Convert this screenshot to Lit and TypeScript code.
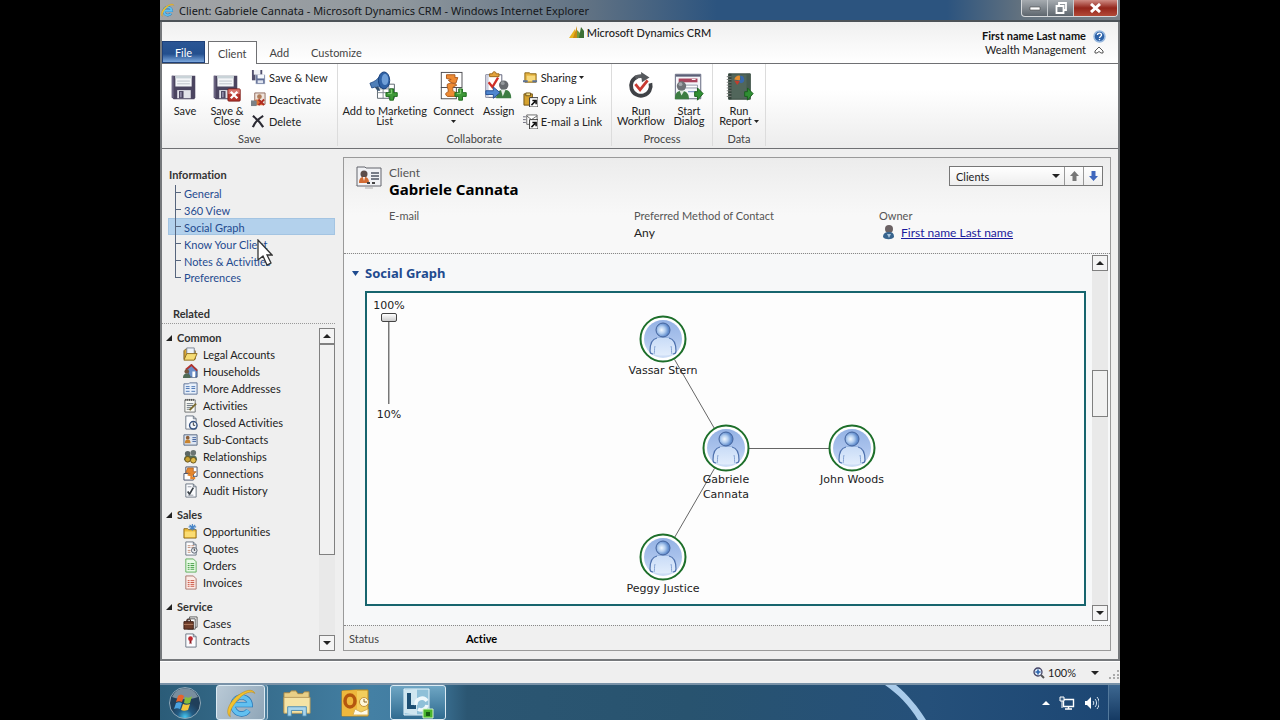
import { LitElement, html, svg, css } from "lit";
import { customElement, property, state } from "lit/decorators.js";
import { classMap } from "lit/directives/class-map.js";

const floppy = svg`<g transform="translate(2 4) scale(.96)">
  <path d="M1 1h26v24l-1 2H3l-2-2z" fill="#4b4560"/><path d="M1 1h2v25l-2-1z" fill="#6d6684"/>
  <path d="M5 1h18v12H5z" fill="#f4f6f8"/><path d="M5 1h18v3H5z" fill="#c9d3d8"/><path d="M7 7h14M7 10h14" stroke="#b9bfc6"/>
  <path d="M7 17h15v9H7z" fill="#e3e4ea"/><path d="M9 18h5v8H9z" fill="#4b4560"/><path d="M10 19h2v6h-2z" fill="#8f8aa5"/></g>`;
const plus = svg`<path d="M22 19h4v4h4v4h-4v4h-4v-4h-4v-4h4z" fill="#3f9a38" stroke="#1d6a1c"/><path d="M23 20h1v4h-4" stroke="#8ccf7e" fill="none"/>`;
const play = svg`<path d="M23 22h3v-4l6 6-6 7v-4h-3z" fill="#2f8f33" stroke="#1a5f1e"/>`;
const manGreen = svg`<circle cx="9" cy="16" r="5" fill="#6e7176"/><circle cx="8" cy="14" r="2" fill="#a2a6aa"/><path d="M2 30c0-7 3-9 7-9s8 2 8 9z" fill="#3d7d43"/><path d="M7 21l2 5 3-5z" fill="#dfe8df"/>`;
const shortcut = svg`<path d="M7 6h9v10H7z" fill="#fff" stroke="#333"/><path d="M9 14l4-4m-3-1h4v4" stroke="#111" stroke-width="1.6" fill="none"/>`;
const page = svg`<path d="M3 1h8l3 3v11H3z" fill="#fbfcfe" stroke="#6c7684"/><path d="M11 1v3h3" fill="none" stroke="#6c7684"/>`;

const big: Record<string, unknown> = {
  save: floppy,
  saveClose: svg`${floppy}<rect x="18" y="19" width="13" height="13" rx="1" fill="#b5342c" stroke="#7d1d19"/><path d="M18.500 19.500h12v5h-12z" fill="#d9776f"/><path d="M21 22l7 7m0-7l-7 7" stroke="#fff" stroke-width="2.400"/>`,
  marketing: svg`<path d="M9 14h18v15H9z" fill="#fff" stroke="#59636c"/><path d="M9 19h18M9 23h18M15 14v15M21 14v15" stroke="#7d878e"/>
    <path d="M1 13c6-2 9-5 13-11v16c-4-2-7-1-11 0z" fill="#4f7fb8" stroke="#27508a"/><ellipse cx="16" cy="10" rx="6" ry="9" fill="#2f62a6" stroke="#173f7a"/><ellipse cx="17" cy="9" rx="3.500" ry="6" fill="#6f9fd8"/><path d="M6 17l3 4h3l-2-4z" fill="#35506f"/>${plus}`,
  connect: svg`<rect x="3.500" y="1.500" width="22" height="16" fill="#fff" stroke="#4b4b50"/><rect x="3.500" y="17.500" width="16" height="12" fill="#fff" stroke="#4b4b50"/><path d="M9 4h9v3h3l-2 6h-4l-4-3 3-1-5-1z" fill="#ee8b33" stroke="#a7551a"/><path d="M10 14c4-2 7-1 10 1l-4 2c-1 4 0 5 4 6l-2 4h-8c-3-2-2-4 1-5 0-4-2-5-1-8z" fill="#ee8b33" stroke="#a7551a"/>${plus}`,
  assign: svg`<path d="M3 4h17v24H3z" fill="#fff" stroke="#5c5f78"/><path d="M3 4h3v24H3z" fill="#cdd0df"/><path d="M7 3h3c0-3 4-3 4 0h3v3H7z" fill="#e3a33c" stroke="#9a6518"/><path d="M6 12l4 5 6-10" stroke="#cf3029" stroke-width="2.500" fill="none"/><circle cx="22" cy="15" r="5" fill="#66696e"/><circle cx="21" cy="13" r="2" fill="#94989c"/><path d="M14 29c0-7 3-9 8-9s8 2 8 9z" fill="#3d7d43"/><path d="M19 20l2 7 3-7z" fill="#e8eee8"/><path d="M3 21h8v-4l7 6-7 6v-4H3z" fill="#4e86cf" stroke="#234f94"/>`,
  workflow: svg`<path d="M13 6A10.500 10.500 0 1 0 27 13" fill="none" stroke="#3f4246" stroke-width="4"/><path d="M11 7A11 11 0 0 1 20 6" fill="none" stroke="#5a5d61" stroke-width="4"/><path d="M17 1l9 6-8 5z" fill="#55585c"/><path d="M11 14l5 6 8-10" fill="none" stroke="#c93a31" stroke-width="3"/>`,
  dialog: svg`<path d="M2.500 3.500h27v26h-27z" fill="#f5f6fa" stroke="#5b6077"/><path d="M3 4h26v2H3z" fill="#5b6077"/><path d="M6 8h20v4H6z" fill="#a8435c"/><path d="M20 9h4" stroke="#fff"/><path d="M7 15h19v3H7z" fill="#fff" stroke="#8f94a8"/><path d="M16 22h9" stroke="#5a79b8"/>${manGreen}${play}`,
  report: svg`<path d="M6 3h23v27H6z" fill="#51665b" stroke="#38493f"/><path d="M6 3h3v27H6z" fill="#33443b"/><path d="M25 3h4v27h-4z" fill="#465a50"/><path d="M4 6h5M4 9h5M4 12h5M4 15h5M4 18h5M4 21h5M4 24h5M4 27h5" stroke="#777b78"/><path d="M12 9a5 5 0 0 1 6-4v5z" fill="#e58c2f"/><path d="M18 5a4 4 0 0 1 1 8l-3-2 3-2z" fill="#3768ad"/><path d="M12 10l6 1-3 4z" fill="#c43d2b"/>${play}`,
};

const small: Record<string, unknown> = {
  saveNew: svg`<path d="M1 0h11v11H1z" fill="#51506e"/><path d="M3 0h7v5H3z" fill="#eef1f6"/><path d="M5 5h10v10H5z" fill="#5d6b93" stroke="#f0f2f8" stroke-width=".6"/><path d="M7 5h7v4H7z" fill="#f4f7fc"/><path d="M7 11h6v3H7z" fill="#dfe4ef"/>`,
  deactivate: svg`<path d="M4 1h11v12H4z" fill="#efe4dd" stroke="#906a5c"/><circle cx="9" cy="5" r="2.500" fill="#b07c58"/><path d="M2 14c0-5 2-6 5-6s6 2 6 6z" fill="#dd7336"/><path d="M0 9h6v6H0z" fill="#7b8187"/><path d="M8 8l6 6m0-6l-6 6" stroke="#b12c22" stroke-width="2"/>`,
  del: svg`<path d="M2 2c4 3 8 7 11 12M13 2C8 5 4 9 2 14" stroke="#2b2a33" stroke-width="2.300" fill="none"/>`,
  sharing: svg`<path d="M2 3h5l1 1h6v9H2z" fill="#e4b23f" stroke="#8b6618"/><path d="M4 6h9v6H4z" fill="#f7d97c"/><path d="M0 12h5m5 0h5" stroke="#5c7295" stroke-width="2"/>`,
  copyLink: svg`<path d="M1 2h9v12H1z" fill="#d5a22f" stroke="#6f5214"/><path d="M3 1h5v3H3z" fill="#f3dd8b" stroke="#6f5214"/>${shortcut}`,
  emailLink: svg`<path d="M4 1h11v10H4z" fill="#fff" stroke="#666"/><path d="M4 2l5 4 6-4" fill="none" stroke="#666"/><path d="M0 3h3M0 6h3M0 9h3" stroke="#667"/>${shortcut}`,
  legal: svg`<path d="M1 4l2-2h4l1 2h5v9H1z" fill="#d9a534" stroke="#7c6124"/><path d="M4 1h8v8H4z" fill="#eef3fa" stroke="#7c8694"/><path d="M4 7h11l-3 7H1z" fill="#f6dc74" stroke="#8d6c1e"/>`,
  households: svg`<path d="M4 6l5-5 6 5v8H7z" fill="#6c8fc9" stroke="#34496f"/><path d="M3 6l6-5 6 6" fill="none" stroke="#b3332d" stroke-width="2"/><path d="M10 8h3v6h-3z" fill="#fff"/><circle cx="4" cy="8" r="2.500" fill="#74553d"/><path d="M0 15c0-4 2-5 4-5s4 1 4 5z" fill="#4f6b57"/>`,
  addresses: svg`<path d="M1 3h5l1-1h8v12H1z" fill="#e8f0fb" stroke="#5d7296"/><path d="M3 6h4m2 0h4M3 8h4m2 0h4M3 11h4m2 0h4" stroke="#4873b2"/>`,
  activities: svg`<path d="M2 2h11v13H2z" fill="#fafaf5" stroke="#6c6f70"/><path d="M3 1v2m2-2v2m2-2v2m2-2v2m2-2v2" stroke="#444"/><path d="M4 6h7M4 8h7M4 10h5M4 12h4" stroke="#6e7780"/><path d="M7 13l7-7" stroke="#7b6b2f" stroke-width="2"/>`,
  closed: svg`${page}<circle cx="11" cy="11" r="4" fill="#f3f7fd" stroke="#35517f" stroke-width="1.500"/><path d="M11 8v3h2" fill="none" stroke="#333"/>`,
  contacts: svg`<path d="M1 3h14v11H1z" fill="#dfe7f3" stroke="#54647f"/><circle cx="5" cy="6" r="2" fill="#8d6038"/><path d="M2 12c0-3 1-4 3-4s3 1 3 4z" fill="#c8832e"/><path d="M10 6h4M10 8h4M10 10h4" stroke="#3e5f9c"/>`,
  relations: svg`<circle cx="5" cy="5" r="3" fill="#5c6663"/><circle cx="11" cy="4" r="3" fill="#6b7573"/><path d="M1 12c0-4 2-5 5-5h5c3 0 4 2 4 5z" fill="#54705f"/><circle cx="5" cy="11" r="3" fill="#c6a032" stroke="#65511b"/><circle cx="11" cy="12" r="3" fill="#e0bb49" stroke="#65511b"/>`,
  connections: svg`<path d="M3 1h12v10H3z" fill="#fff" stroke="#46506a"/><path d="M1 8h10v7H1z" fill="#fff" stroke="#46506a"/><path d="M5 2h6v4h3l-4 4-5-3H3z" fill="#e5862d" stroke="#a2561c" stroke-width=".7"/><path d="M5 9l4 1v3h4" fill="none" stroke="#e5862d" stroke-width="2.500"/>`,
  audit: svg`${page}<path d="M5 9l2 3 4-7" fill="none" stroke="#393f46" stroke-width="1.800"/><path d="M5 4h4M5 13h6" stroke="#939ba5"/>`,
  opportunities: svg`<path d="M1 5h4l1 1h8v9H1z" fill="#eebd3b" stroke="#8c6a1c"/><path d="M2 8h11v6H2z" fill="#fbdc72"/><path d="M10 0v7M6 3h8M7 1l6 5M13 1L7 6" stroke="#4a86c7" stroke-width="1.200"/>`,
  quotes: svg`${page}<path d="M5 5h3m1 0h3M5 7h3m1 0h3M5 10h3M5 12h3" stroke="#c28d74"/><circle cx="12" cy="10" r="3" fill="#e5e9ee" stroke="#555f6d"/><path d="M12 8v2h1" stroke="#333" fill="none"/>`,
  orders: svg`<path d="M3 1h8l3 3v11H3z" fill="#e8fae6" stroke="#5fae5b"/><path d="M5 6h2m1 0h4M5 8h2m1 0h4M5 10h2m1 0h4M5 12h2m1 0h4" stroke="#3f9c3f"/>`,
  invoices: svg`<path d="M3 1h8l3 3v11H3z" fill="#fdebe7" stroke="#a9746a"/><path d="M5 6h2m1 0h4M5 8h2m1 0h4M5 10h2m1 0h4M5 12h2m1 0h4" stroke="#c9523f"/>`,
  cases: svg`<path d="M7 1h8v11H7z" fill="#fff" stroke="#555"/><path d="M5 3h8v11H5z" fill="#fff" stroke="#555"/><path d="M1 6h10v8H1z" fill="#6e3d2a" stroke="#3c1f15"/><path d="M4 6V4h4v2" fill="none" stroke="#3c1f15"/><path d="M1 9h10" stroke="#b17c60"/>`,
  contracts: svg`${page}<circle cx="8" cy="6" r="2.500" fill="#c0262d"/><path d="M7 8h2v4l-1-1-1 1z" fill="#8e1a20"/>`,
};

const icon = (set: Record<string, unknown>, name: string, size: number, box: number) =>
  html`<svg class="ico" width=${size} height=${size} viewBox="0 0 ${box} ${box}" aria-hidden="true">${set[name]}</svg>`;
const tri = (dir: "up" | "down") =>
  html`<svg width="8" height="4" viewBox="0 0 8 4" aria-hidden="true"><path d=${dir === "up" ? "M0 4h8L4 0z" : "M0 0h8L4 4z"} fill="#222"/></svg>`;

type Big = { icon: string; lines: string[]; kind?: string; menu?: "below" | "inline" };
type Small = { icon: string; text: string; menu?: boolean };
const ribbon: { name: string; big: Big[]; small: Small[] }[] = [
  { name: "Save", big: [{ icon: "save", lines: ["Save"] }, { icon: "saveClose", lines: ["Save &", "Close"] }],
    small: [{ icon: "saveNew", text: "Save & New" }, { icon: "deactivate", text: "Deactivate" }, { icon: "del", text: "Delete" }] },
  { name: "Collaborate", big: [{ icon: "marketing", lines: ["Add to Marketing", "List"], kind: "wide" }, { icon: "connect", lines: ["Connect"], kind: "mid", menu: "below" }, { icon: "assign", lines: ["Assign"] }],
    small: [{ icon: "sharing", text: "Sharing", menu: true }, { icon: "copyLink", text: "Copy a Link" }, { icon: "emailLink", text: "E-mail a Link" }] },
  { name: "Process", big: [{ icon: "workflow", lines: ["Run", "Workflow"], kind: "roomy" }, { icon: "dialog", lines: ["Start", "Dialog"] }], small: [] },
  { name: "Data", big: [{ icon: "report", lines: ["Run", "Report"], kind: "mid", menu: "inline" }], small: [] },
];

const base = css`
  *, *::before, *::after { box-sizing: border-box; }
  svg { display: block; flex: none; }
  button { font: inherit; font-variant-ligatures: inherit; color: inherit; background: none; border: 0; padding: 0; margin: 0; }
  a { text-decoration: none; color: inherit; }
`;

@customElement("crm-ribbon")
class CrmRibbon extends LitElement {
  static styles = [base, css`
    :host { display: block; color: #222; }
    .top { display: grid; grid-template-columns: 1fr auto 1fr; height: 42px; background: linear-gradient(#f0f0f0, #fff); border-bottom: 1px solid #6f7073; }
    .tabs { display: flex; align-items: flex-end; gap: 3px; }
    .tab { height: 22px; padding: 0 10px 0 9px; color: #444; }
    .file { width: 43px; padding: 0; color: #fff; border: 1px solid #1e4079; background: linear-gradient(#2b5695, #234f8e 60%, #7ba7dd); }
    .tab.active { height: 23px; margin-bottom: -1px; border: 1px solid #6f7073; border-bottom: 0; background: #fff; }
    .brand { display: flex; align-items: center; gap: 3px; height: 20px; color: #222; font-weight: 500; }
    .who { justify-self: end; display: grid; grid-template-columns: auto 12px; column-gap: 7px; align-content: start; align-items: center; padding: 7px 13px 0 0; line-height: 14px; text-align: right; color: #222; }
    .who strong { color: #111; }
    .bar { display: flex; height: 85px; background: linear-gradient(#fff 30%, #ececec); border-bottom: 1px solid #6f7073; }
    .group { display: flex; flex-direction: column; padding: 3px 2px 0; border-right: 1px solid #dcdcdc; margin-bottom: 2px; }
    .cmds { display: flex; height: 67px; }
    .caption { text-align: center; line-height: 14px; color: #444; }
    .big { display: flex; flex-direction: column; align-items: center; justify-content: flex-start; min-width: 42px; padding-top: 4px; line-height: 10px; }
    .big .ico { margin-bottom: 3px; }
    .big.wide { min-width: 90px; }
    .big.mid { min-width: 48px; }
    .big.roomy { min-width: 54px; }
    .line { display: flex; align-items: center; gap: 2px; white-space: nowrap; }
    .below { height: 10px; display: flex; align-items: center; }
    .col { display: flex; flex-direction: column; padding: 0 7px 0 3px; margin-top: -1px; }
    .small { display: flex; align-items: center; gap: 3px; height: 22px; white-space: nowrap; }
  `];
  private arrow = html`<svg width="5" height="3" viewBox="0 0 5 3"><path d="M0 0h5L2.500 3z" fill="#222"/></svg>`;
  render() {
    return html`
      <div class="top">
        <div class="tabs" role="tablist">
          <button class="tab file">File</button>
          <button class="tab active" role="tab" aria-selected="true">Client</button>
          <button class="tab" role="tab">Add</button>
          <button class="tab" role="tab">Customize</button>
        </div>
        <div class="brand">
          <svg width="15" height="12" viewBox="0 0 15 12"><path d="M0 12L6 3v9z" fill="#e8b51e"/><path d="M4 12L8 0v12z" fill="#c98b12"/><path d="M8 12V4l3 3v5z" fill="#6f9a3c"/><path d="M10 12l2-11 3 4v7z" fill="#3c6f35"/></svg>
          <span>Microsoft Dynamics CRM</span>
        </div>
        <div class="who">
          <strong>First name Last name</strong>
          <svg width="13" height="13" viewBox="0 0 13 13"><circle cx="6.500" cy="6.500" r="5.500" fill="#2d62a8" stroke="#98b9df" stroke-width="1.500"/><path d="M4.500 5c0-2.500 4-2.500 4 0 0 1.400-2 1.500-2 3m0 1v1.200" stroke="#fff" stroke-width="1.400" fill="none"/></svg>
          <span>Wealth Management</span>
          <svg width="12" height="8" viewBox="-1 0 12 8"><path d="M1 5l4-4 4 4v2H7L5 5.500 3 7H1z" fill="#fff" stroke="#555"/></svg>
        </div>
      </div>
      <div class="bar">
        ${ribbon.map(g => html`<section class="group" aria-label=${g.name}>
          <div class="cmds">
            ${g.big.map(b => html`<button class="big ${b.kind ?? ""}">
              ${icon(big, b.icon, 32, 34)}
              ${b.lines.map((l, i) => html`<span class="line">${l}${b.menu === "inline" && i === b.lines.length - 1 ? this.arrow : ""}</span>`)}
              ${b.menu === "below" ? html`<span class="below">${this.arrow}</span>` : ""}
            </button>`)}
            ${g.small.length ? html`<div class="col">${g.small.map(s => html`<button class="small">${icon(small, s.icon, 15, 16)}<span class="line">${s.text}${s.menu ? this.arrow : ""}</span></button>`)}</div>` : ""}
          </div>
          <div class="caption">${g.name}</div>
        </section>`)}
      </div>`;
  }
}

const related: [string, [string, string][]][] = [
  ["Common", [["legal", "Legal Accounts"], ["households", "Households"], ["addresses", "More Addresses"], ["activities", "Activities"], ["closed", "Closed Activities"], ["contacts", "Sub-Contacts"], ["relations", "Relationships"], ["connections", "Connections"], ["audit", "Audit History"]]],
  ["Sales", [["opportunities", "Opportunities"], ["quotes", "Quotes"], ["orders", "Orders"], ["invoices", "Invoices"]]],
  ["Service", [["cases", "Cases"], ["contracts", "Contracts"]]],
];

const scrollCss = css`
  .scroll { display: flex; flex-direction: column; width: 16px; background: #e9e9e9; }
  .step { display: grid; place-items: center; height: 16px; border: 1px solid #808080; background: #f4f4f4; }
  .track { flex: 1; display: grid; }
  .thumb { border: 1px solid #808080; background: #f1f1f1; }
`;

@customElement("crm-nav")
class CrmNav extends LitElement {
  @state() private current = "Social Graph";
  static styles = [base, scrollCss, css`
    :host { display: flex; flex-direction: column; min-height: 0; padding: 17px 8px 8px 0; color: #222; }
    h2, h3 { margin: 0; font-size: 11px; line-height: 17px; color: #333; }
    .info { padding-left: 7px; }
    ul { list-style: none; margin: 0; padding: 0; }
    .sections { padding-top: 1px; margin-left: -1px; }
    .sections li { display: grid; grid-template-columns: 15px 1fr; border: 1px solid transparent; height: 17px; align-items: center; }
    .sections li.on { background: #b3d1ec; border-color: #a3c4e2; }
    .sections a { color: #1f4b8f; line-height: 15px; }
    .branch { height: 17px; border-left: 1px solid #56657d; margin-left: 6px; }
    .branch::after { content: ""; display: block; width: 5px; height: 8px; border-bottom: 1px solid #56657d; }
    li:last-child .branch { height: 8px; align-self: start; }
    .related { margin: 18px 0 0; padding-left: 11px; border-bottom: 1px dotted #999; line-height: 19px; }
    .pane { flex: 1; min-height: 0; display: grid; grid-template-columns: 1fr 16px; padding-top: 4px; }
    .groups { overflow: hidden; padding: 1px 0 0 4px; }
    .head { display: flex; align-items: center; gap: 5px; }
    .group { padding-bottom: 7px; }
    .item { display: flex; align-items: center; gap: 5px; height: 17px; padding-left: 17px; white-space: nowrap; }
    .track { grid-template-rows: 212fr 80fr; }
  `];
  render() {
    const info = ["General", "360 View", "Social Graph", "Know Your Client", "Notes & Activities", "Preferences"];
    return html`
      <nav class="info" aria-label="Information"><h2>Information</h2>
        <ul class="sections">${info.map(t => html`<li class=${classMap({ on: t === this.current })}><span class="branch"></span><a href="#" @click=${(e: Event) => { e.preventDefault(); this.current = t; }}>${t}</a></li>`)}</ul>
      </nav>
      <h2 class="related">Related</h2>
      <div class="pane">
        <nav class="groups" aria-label="Related">
          ${related.map(([name, items]) => html`<div class="group">
            <h3 class="head"><svg width="6" height="6" viewBox="0 0 6 6"><path d="M6 0v6H0z" fill="#222"/></svg>${name}</h3>
            <ul>${items.map(([i, t]) => html`<li><a class="item" href="#">${icon(small, i, 15, 16)}${t}</a></li>`)}</ul>
          </div>`)}
        </nav>
        <div class="scroll"><button class="step" aria-label="Scroll up">${tri("up")}</button><div class="track"><div class="thumb"></div></div><button class="step" aria-label="Scroll down">${tri("down")}</button></div>
      </div>`;
  }
}

const people = [
  { x: 296, y: 46, lines: ["Vassar Stern"] },
  { x: 359, y: 155, lines: ["Gabriele", "Cannata"] },
  { x: 485, y: 155, lines: ["John Woods"] },
  { x: 296, y: 264, lines: ["Peggy Justice"] },
];

@customElement("social-graph")
class SocialGraph extends LitElement {
  @property({ type: Number }) zoom = 100;
  static styles = [base, css`
    :host { display: block; position: relative; border: 2px solid #17656e; background: #fdfdfd; font: 11px/15px "DejaVu Sans", Verdana, sans-serif; color: #222; }
    .edges { position: absolute; inset: 0; width: 100%; height: 100%; }
    .node { position: absolute; width: 90px; margin: -24px 0 0 -45px; display: flex; flex-direction: column; align-items: center; text-align: center; }
    .zoom { position: absolute; left: 4px; top: 5px; width: 36px; display: flex; flex-direction: column; align-items: center; }
    input { appearance: none; writing-mode: vertical-lr; direction: rtl; width: 18px; height: 91px; margin: 0 0 3px; background: linear-gradient(90deg, transparent 8px, #777 8px, #777 9px, #bbb 9px, #bbb 10px, transparent 10px); }
    input::-webkit-slider-thumb { appearance: none; width: 16px; height: 9px; border: 1px solid #444; border-radius: 2px; background: linear-gradient(#fff, #ccc); }
  `];
  render() {
    const hub = people[1];
    return html`
      <svg class="edges">${people.filter(p => p !== hub).map(p => {
        const d = Math.hypot(p.x - hub.x, p.y - hub.y), ux = (p.x - hub.x) / d, uy = (p.y - hub.y) / d;
        return svg`<line x1=${hub.x + ux * 23} y1=${hub.y + uy * 23 + 0.5} x2=${p.x - ux * 23} y2=${p.y - uy * 23 + 0.5} stroke="#666"/>`;
      })}</svg>
      ${people.map(p => html`<div class="node" style="left:${p.x}px;top:${p.y}px">
        <svg width="48" height="48" viewBox="0 0 48 48"><defs>
            <linearGradient id="d" x2="0" y2="1"><stop offset="0" stop-color="#94b2e4"/><stop offset=".5" stop-color="#a9c2ec"/><stop offset="1" stop-color="#cfdff6"/></linearGradient>
            <radialGradient id="h" cx=".4" cy=".5"><stop offset="0" stop-color="#f2f8ff"/><stop offset=".5" stop-color="#b4cff0"/><stop offset="1" stop-color="#5f8bcc"/></radialGradient>
            <linearGradient id="b" x2="0" y2="1"><stop offset="0" stop-color="#c9dcf7"/><stop offset="1" stop-color="#e2edfc"/></linearGradient></defs>
          <circle cx="24" cy="24" r="22.500" fill="#fff" stroke="#1d6f2a" stroke-width="2"/>
          <circle cx="24" cy="24" r="19" fill="url(#d)"/>
          <path d="M11 36c0-8 2-12 7-13h12c5 1 7 5 7 13 0 2-2 3-4 3-3 2-15 2-18 0-2 0-4-1-4-3z" fill="url(#b)"/>
          <path d="M14 39c-2 0-3-1-3-3 0-8 2-12 7-13M34 39c2 0 3-1 3-3 0-8-2-12-7-13" fill="none" stroke="#4d70ad" stroke-width="1.200"/>
          <path d="M15 39c1-2 0-5 1-8M33 39c-1-2 0-5-1-8" fill="none" stroke="#86a4d4"/>
          <path d="M18 22.500h12" stroke="#9ab6e0"/>
          <circle cx="24" cy="15" r="7" fill="url(#h)" stroke="#43639c"/>
        </svg>
        ${p.lines.map(l => html`<span>${l}</span>`)}
      </div>`)}
      <div class="zoom"><label for="z">100%</label>
        <input id="z" type="range" min="10" max="100" .value=${String(this.zoom)}>
        <span>10%</span></div>`;
  }
}

@customElement("crm-record")
class CrmRecord extends LitElement {
  static styles = [base, scrollCss, css`
    :host { display: flex; flex-direction: column; min-height: 0; border: 1px solid #9a9a9a; background: #f7f8f9; color: #222; }
    header { display: grid; grid-template-columns: 45px 1fr auto; grid-template-rows: 42px 1fr; height: 96px; padding: 8px 7px 0 0; background: linear-gradient(#ececec, #f8f8f8 60%); border-bottom: 1px dotted #888; }
    .pic { margin: 0 0 0 11px; }
    .kind { font-size: 12px; line-height: 13px; color: #555; }
    h1 { margin: 0; font: bold 15px/20px "Noto Sans", "Open Sans", sans-serif; color: #000; }
    .pick { display: flex; align-self: start; height: 20px; border: 1px solid #777; background: linear-gradient(#fff, #eee); }
    .choose { display: grid; align-items: center; }
    .choose > * { grid-area: 1 / 1; }
    .choose svg { justify-self: end; margin-right: 4px; pointer-events: none; }
    select { appearance: none; width: 114px; height: 18px; border: 0; background: none; padding: 0 6px; font: inherit; color: #222; }
    .pick button { width: 19px; display: grid; place-items: center; border-left: 1px solid #999; }
    dl { grid-column: 2 / 4; margin: 0; display: grid; grid-template-columns: 35fr 35fr 32fr; }
    dt { color: #555; line-height: 16px; }
    dd { margin: 0; font-size: 12px; line-height: 17px; display: flex; gap: 6px; align-items: center; }
    dd a { color: #1b1b9c; text-decoration: underline; }
    .body { flex: 1; min-height: 0; display: grid; grid-template-columns: 1fr 16px; gap: 6px; padding: 1px 2px 4px 0; }
    .content { display: flex; flex-direction: column; padding: 6px 0 15px 21px; }
    h2 { display: flex; align-items: center; gap: 6px; margin: 0 0 6px -13px; font: bold 13px/24px "Noto Sans", "Open Sans", sans-serif; color: #1f4b8f; }
    social-graph { flex: 1; }
    .track { grid-template-rows: 99fr 47fr 189fr; }
    .track .thumb { grid-row: 2; }
    footer { display: flex; align-items: center; height: 25px; border-top: 1px dotted #888; padding-left: 5px; background: #f0f0f0; }
    footer span { width: 117px; color: #444; }
    footer strong { color: #000; }
  `];
  render() {
    return html`
      <header>
        <svg class="pic" width="28" height="26" viewBox="0 0 28 26"><path d="M0 20h16l3-3H6z" fill="#c9c9c9"/><path d="M2 1h8l1 1h15v18H2z" fill="#f1f2f5" stroke="#62656d"/><circle cx="9" cy="8" r="3.500" fill="#5d4d49"/><path d="M4 17c0-5 2-6 5-6s5 1 5 6z" fill="#d26c34"/><path d="M8 11l1 4 1-4z" fill="#fff"/><path d="M16 7h8M16 10h8M16 13h8" stroke="#4f5663" stroke-width="1.500"/><path d="M12 17h3m2 0h3" stroke="#444" stroke-width="2"/><path d="M10 22h8" stroke="#d0d0d0" stroke-width="2"/></svg>
        <div><div class="kind">Client</div><h1>Gabriele Cannata</h1></div>
        <div class="pick">
          <div class="choose"><select aria-label="Record set"><option>Clients</option></select>${tri("down")}</div>
          <button aria-label="Previous"><svg width="9" height="10" viewBox="0 0 9 10"><path d="M4.500 0L9 5H6.500v5h-4V5H0z" fill="#777"/></svg></button>
          <button aria-label="Next"><svg width="9" height="10" viewBox="0 0 9 10"><path d="M4.500 10L9 5H6.500V0h-4v5H0z" fill="#3f67bd"/></svg></button>
        </div>
        <span></span>
        <dl>
          <div><dt>E-mail</dt><dd></dd></div>
          <div><dt>Preferred Method of Contact</dt><dd>Any</dd></div>
          <div><dt>Owner</dt><dd><svg width="16" height="15" viewBox="0 0 16 15"><circle cx="10" cy="4" r="4" fill="#6b6264"/><path d="M4 12c0-4 3-5 6-5s5 1 5 5c-2 3-9 3-11 0z" fill="#37648e"/><path d="M8 9l2 4 2-4z" fill="#a8c4dc"/></svg><a href="#">First name Last name</a></dd></div>
        </dl>
      </header>
      <div class="body">
        <div class="content"><h2><svg width="7" height="5" viewBox="0 0 7 5"><path d="M0 0h7L3.500 5z" fill="#1f4b8f"/></svg>Social Graph</h2><social-graph></social-graph></div>
        <div class="scroll"><button class="step" aria-label="Scroll up">${tri("up")}</button><div class="track"><div class="thumb"></div></div><button class="step" aria-label="Scroll down">${tri("down")}</button></div>
      </div>
      <footer><span>Status</span><strong>Active</strong></footer>`;
  }
}

const ie = svg`<path d="M22 22A8 8 0 1 1 23.500 16.500H9" fill="none" stroke="#1e71b5" stroke-width="5"/><path d="M22 22A8 8 0 1 1 23.500 16.500H9" fill="none" stroke="#62c0f0" stroke-width="3.800"/><path d="M5 28c-6-4 0-15 7-20S26 1 28 6c-4-3-10 0-14 4S3 22 5 28z" fill="#f2c230" stroke="#bb8714" stroke-width=".5"/>`;

@customElement("app-root")
class AppRoot extends LitElement {
  static styles = [base, css`
    :host { display: flex; justify-content: center; height: 100vh; background: #000; font-family: Lato, "Open Sans", sans-serif; font-size: 11px; font-variant-ligatures: none; overflow: hidden; }
    .screen { position: relative; width: min(100vw, calc(100vh * 4 / 3)); display: flex; flex-direction: column; }
    .title { display: flex; align-items: flex-start; height: 22px; border-bottom: 2px solid #4d5358; background: linear-gradient(90deg, #a3a5a7, #8f979d 25%, #5f7183 45%, #2c547f 58%, #2c547f 82%, #65737f 90%, #777f86); }
    .name { display: flex; align-items: center; gap: 4px; height: 20px; flex: 1; color: #15181b; font-family: "Noto Sans", "Open Sans", sans-serif; white-space: nowrap; }
    .win { display: flex; border: 1px solid #d6d9dc; border-top: 0; border-radius: 0 0 4px 4px; margin-right: 2px; background: linear-gradient(#a6abb0, #5e666e); overflow: hidden; }
    .win button { width: 26px; height: 16px; display: grid; place-items: center; border-right: 1px solid #c7cbcf; }
    .win .close { width: 43px; border: 0; background: linear-gradient(#cf8c84, #93251b 50%, #b34a38); }
    .frame { flex: 1; min-height: 0; display: flex; flex-direction: column; border: 2px solid #76797c; border-top: 0; background: #efefef; }
    .work { flex: 1; min-height: 0; display: grid; grid-template-columns: 181px 1fr; }
    crm-record { margin: 8px 7px 8px 0; }
    .status { height: 22px; display: flex; align-items: center; justify-content: flex-end; gap: 3px; padding-right: 1px; background: #efefef; border-top: 1px solid #fff; color: #222; }
    .more { padding: 0 7px 0 12px; }
    .task { position: relative; display: flex; align-items: stretch; height: 37px; border-top: 2px solid #7992a8; background: linear-gradient(90deg, #2b5c78, #4480a4 22%, #417ba0 28%, #2b5672 32%, #28536f 55%, #25507a 80%, #1c4673); color: #fff; }
    .task button { display: grid; place-items: center; width: 58px; }
    .task .start { width: 50px; }
    .task .on { width: 49px; margin: 0 3px 0 6px; border: 1px solid #dcebf4; border-radius: 3px; background: linear-gradient(120deg, #b9c9d6, #8fa6b8); box-shadow: 2px 0 0 #4d7f9d, 3px 0 0 #b5ccda; }
    .task .lync { width: 56px; margin: 0 3px 0 6px; background: linear-gradient(#6fa6c4, #2f6b90); box-shadow: none; }
    .swoosh { position: absolute; left: 75%; top: 0; }
    .tray { margin-left: auto; display: flex; align-items: center; gap: 9px; }
    .peek { align-self: stretch; width: 12px; border-left: 1px solid #53799c; background: linear-gradient(#3d6790, #153a63); }
    .cursor { position: absolute; left: 97px; top: 239px; }
  `];
  render() {
    return html`<main class="screen">
      <div class="title">
        <div class="name"><svg width="15" height="16" viewBox="0 0 30 30">${ie}</svg>Client: Gabriele Cannata - Microsoft Dynamics CRM - Windows Internet Explorer</div>
        <div class="win">
          <button aria-label="Minimize"><svg width="12" height="5" viewBox="0 0 12 5"><path d="M1 1h10v3H1z" fill="#fff" stroke="#444" stroke-width=".6"/></svg></button>
          <button aria-label="Restore"><svg width="12" height="12" viewBox="0 0 12 12"><path d="M4 3V1h7v7H9M1.500 4h7v7h-7z" fill="none" stroke="#fff" stroke-width="1.800"/></svg></button>
          <button class="close" aria-label="Close"><svg width="11" height="10" viewBox="0 0 11 10"><path d="M1 1l9 8M10 1L1 9" stroke="#fff" stroke-width="3"/></svg></button>
        </div>
      </div>
      <div class="frame">
        <crm-ribbon></crm-ribbon>
        <div class="work"><crm-nav></crm-nav><crm-record></crm-record></div>
      </div>
      <div class="status">
        <svg width="12" height="12" viewBox="0 0 12 12"><circle cx="5" cy="5" r="4" fill="#e4effa" stroke="#446" stroke-width="1.300"/><path d="M5 2.500v5M2.500 5h5" stroke="#2a63ad" stroke-width="1.600"/><path d="M8 8l3 3" stroke="#555" stroke-width="2"/></svg>
        <span>100%</span><span class="more">${tri("down")}</span>
        <svg width="10" height="12" viewBox="0 0 10 12"><path d="M8 3h2v2H8zM8 7h2v2H8zM4 7h2v2H4zM0 10h2v2H0zM4 10h2v2H4zM8 10h2v2H8z" fill="#aaa"/></svg>
      </div>
      <div class="task">
        <svg class="swoosh" width="50" height="35" viewBox="0 0 50 35"><path d="M5 0h11c12 10 22 22 30 35h-8C29 20 18 9 5 0z" fill="#a9cbea"/></svg>
        <button class="start" aria-label="Start"><svg width="34" height="34" viewBox="0 0 34 34"><defs><radialGradient id="o" cy=".95"><stop offset="0" stop-color="#45c8f2"/><stop offset=".5" stop-color="#235a82"/><stop offset="1" stop-color="#203f5a"/></radialGradient></defs><circle cx="17" cy="17" r="15.500" fill="url(#o)" stroke="#8ea8b8"/><path d="M4 11a14 14 0 0 1 26 0c-8 3-18 3-26 0z" fill="#b5c3cc" opacity=".6"/><path d="M10 10c3-2 4-1 6 0l-2 6c-2-1-4-1-6 0z" fill="#e8632b"/><path d="M17 11c3 1 5 1 7-1l-2 7c-2 1-4 1-6 0z" fill="#86bd3c"/><path d="M8 17c2-1 4-1 6 0l-2 6c-2-1-4-1-6 0z" fill="#4aa2e0"/><path d="M15 18c2 1 5 1 7 0l-2 6c-3 1-5 1-7 0z" fill="#f5c63b"/></svg></button>
        <button class="on" aria-label="Internet Explorer"><svg width="32" height="32" viewBox="0 0 30 30">${ie}</svg></button>
        <button aria-label="Explorer"><svg width="30" height="28" viewBox="0 0 32 30"><path d="M2 4h6l2-2h5l2 3h5l2-2h5v22H2z" fill="#e9cf86" stroke="#9d8245"/><path d="M2 9h28v17H2z" fill="#f5e3a5" stroke="#b6995a"/><path d="M6 29V19h20v10h-4v-6H10v6z" fill="#a9d5ec" stroke="#4e8cb0"/></svg></button>
        <button aria-label="Outlook"><svg width="30" height="30" viewBox="0 0 30 30"><path d="M2 3l14-1h12v26H2z" fill="#f3ce5c" stroke="#bd8a1d"/><path d="M2 3l15-1v26H2z" fill="#eeb83d"/><ellipse cx="10" cy="13" rx="5" ry="6" fill="none" stroke="#b4570f" stroke-width="3.500"/><circle cx="24" cy="14" r="4.500" fill="#fff7d9" stroke="#c79335"/><path d="M24 11v3h3" fill="none" stroke="#8a6423"/><path d="M13 27l2-6 6 3 7-3v6z" fill="#fffbe9" stroke="#d9b25a"/></svg></button>
        <button class="on lync" aria-label="Lync"><svg width="32" height="32" viewBox="0 0 32 32"><path d="M2 2h25v26H2z" fill="#8fc0d8" stroke="#e9f6fc"/><path d="M2 3l13-1v26L2 26z" fill="#cfe6f0"/><path d="M7 6v14h7" fill="none" stroke="#1d4f73" stroke-width="4"/><path d="M14 18a6 6 0 0 1 11-4M25 18a6 6 0 0 1-9 4" fill="none" stroke="#eef7fb" stroke-width="3.500"/><path d="M21 22h10v9H21z" fill="#49b52d" stroke="#d4f3c7"/><path d="M24 25h4v4h-4z" fill="#185d12"/></svg></button>
        <div class="tray">
          <svg width="8" height="4" viewBox="0 0 8 4"><path d="M0 4h8L4 0z" fill="#fff"/></svg>
          <svg width="16" height="14" viewBox="0 0 16 14"><path d="M4.500 3.500h10v7h-10zM6 13h7M9.500 10v3" fill="none" stroke="#fff" stroke-width="1.400"/><path d="M1 1h4v4H1zM3 5v7" fill="#3c6287" stroke="#fff"/></svg>
          <svg width="15" height="14" viewBox="0 0 15 14"><path d="M1 5h2l4-4v12L3 9H1z" fill="#fff"/><path d="M9 5c1 1 1 3 0 4M11 3c2 2 2 6 0 8M13 1c3 4 3 8 0 12" fill="none" stroke="#d9e6f2"/></svg>
          <span class="peek"></span>
        </div>
      </div>
      <svg class="cursor" width="16" height="27" viewBox="0 0 16 27"><path d="M1 1v20l5-4 4 9 4-2-4-8h5z" fill="#fff" stroke="#333" stroke-width="1.300"/></svg>
    </main>`;
  }
}
